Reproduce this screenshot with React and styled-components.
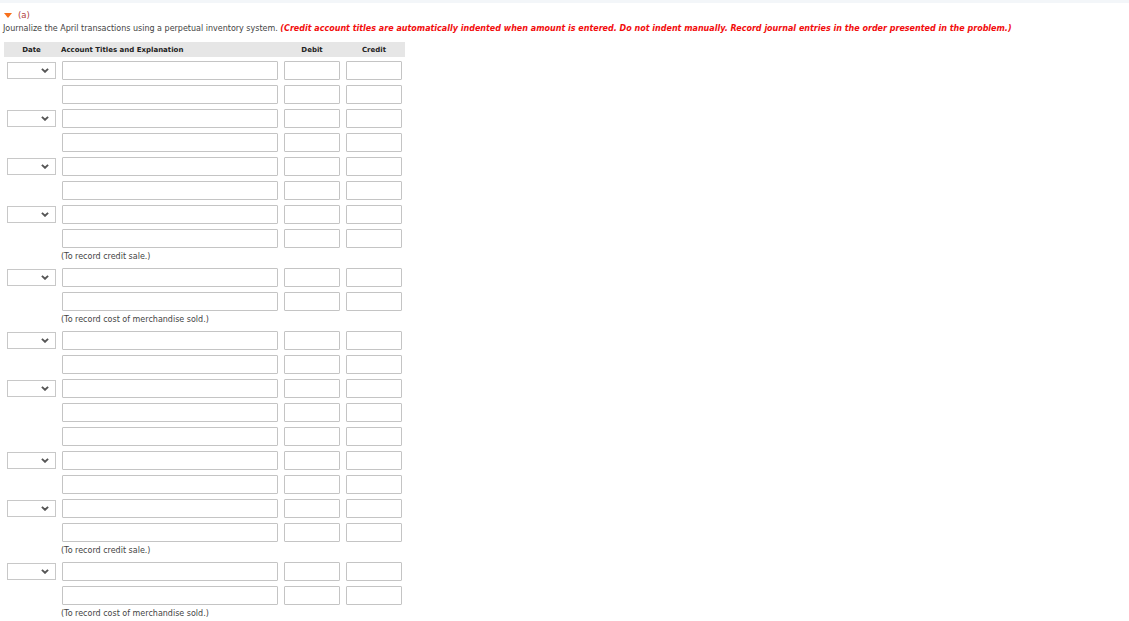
import React from "react";
import styled, { createGlobalStyle } from "styled-components";

const Global = createGlobalStyle`
  html, body { margin: 0; padding: 0; background: #fff; }
  body { font-family: "DejaVu Sans", Verdana, sans-serif; color: #333; }
  * { box-sizing: border-box; }
`;

const TopBand = styled.div`
  height: 3px;
  background: #f3f6f9;
`;

const Section = styled.div`
  padding: 6px 0 0 3px;
`;

const PartTitle = styled.div`
  display: flex;
  align-items: center;
  gap: 6px;
  height: 12px;
  padding-left: 1px;
  font-size: 8.5px;
  color: #b0413e;
`;

const Caret = styled.span`
  width: 0;
  height: 0;
  border-left: 4px solid transparent;
  border-right: 4px solid transparent;
  border-top: 5px solid #f7701c;
`;

const Instruction = styled.div`
  margin-top: 2px;
  font-size: 8px;
  line-height: 11px;
  color: #444;
  white-space: nowrap;
`;

const Emph = styled.span`
  color: #f20d0d;
  font-weight: bold;
  font-style: italic;
`;

const Table = styled.div`
  margin: 8px 0 0 1px;
  width: 401px;
`;

const cols = "55px 222px 62px 62px";

const HeaderRow = styled.div`
  display: grid;
  grid-template-columns: ${cols};
  height: 15px;
  align-items: center;
  background: #e6e6e6;
  font-size: 7px;
  font-weight: bold;
  color: #222;
`;

const HeadCell = styled.div`
  text-align: ${(p) => (p.$left ? "left" : "center")};
  padding-left: ${(p) => (p.$left ? "2px" : "0")};
`;

const Body = styled.div`
  display: flex;
  flex-direction: column;
  gap: 5px;
  padding-top: 4px;
`;

const Row = styled.div`
  display: grid;
  grid-template-columns: ${cols};
  align-items: center;
  height: 19px;
`;

const Cell = styled.div`
  padding: 0 3px;
  display: flex;
  align-items: center;
`;

const Field = styled.div`
  width: 100%;
  height: 19px;
  border: 1px solid #c4c4c4;
  border-radius: 1px;
  background: #fff;
`;

const SelectBox = styled.div`
  position: relative;
  width: 50px;
  height: 17px;
  border: 1px solid #c8c8c8;
  background: #fff;
`;

const Chevron = styled.svg`
  position: absolute;
  right: 6px;
  top: 5px;
`;

const Note = styled.div`
  height: 10px;
  line-height: 8px;
  padding-left: 57px;
  font-size: 8px;
  color: #444;
`;

const entries = [
  { rows: 2 },
  { rows: 2 },
  { rows: 2 },
  { rows: 2, note: "(To record credit sale.)" },
  { rows: 2, note: "(To record cost of merchandise sold.)" },
  { rows: 2 },
  { rows: 3 },
  { rows: 2 },
  { rows: 2, note: "(To record credit sale.)" },
  { rows: 2, note: "(To record cost of merchandise sold.)" },
];

function DateSelect() {
  return (
    <SelectBox>
      <Chevron width="8" height="5" viewBox="0 0 8 5">
        <polyline points="0.9,0.9 4,3.8 7.1,0.9" fill="none" stroke="#555" strokeWidth="1.9" />
      </Chevron>
    </SelectBox>
  );
}

export default function App() {
  const items = [];
  entries.forEach((e, i) => {
    for (let r = 0; r < e.rows; r++) {
      items.push(
        <Row key={`${i}-${r}`}>
          <Cell>{r === 0 && <DateSelect />}</Cell>
          <Cell><Field /></Cell>
          <Cell><Field /></Cell>
          <Cell><Field /></Cell>
        </Row>
      );
    }
    if (e.note) items.push(<Note key={`${i}-n`}>{e.note}</Note>);
  });
  return (
    <>
      <Global />
      <TopBand />
      <Section>
        <PartTitle>
          <Caret />
          <span>(a)</span>
        </PartTitle>
        <Instruction>
          Journalize the April transactions using a perpetual inventory system.{" "}
          <Emph>
            (Credit account titles are automatically indented when amount is entered. Do not indent manually. Record journal entries in the order presented in the problem.)
          </Emph>
        </Instruction>
        <Table>
          <HeaderRow>
            <HeadCell>Date</HeadCell>
            <HeadCell $left>Account Titles and Explanation</HeadCell>
            <HeadCell>Debit</HeadCell>
            <HeadCell>Credit</HeadCell>
          </HeaderRow>
          <Body>{items}</Body>
        </Table>
      </Section>
    </>
  );
}
